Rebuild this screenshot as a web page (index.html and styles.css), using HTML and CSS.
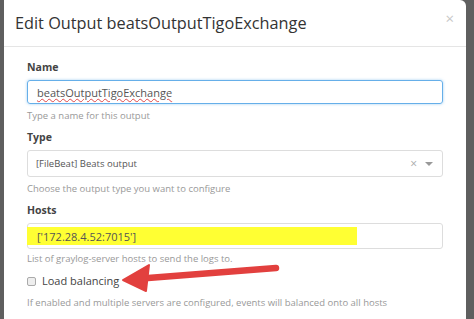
FILE: index.html
```html
<!DOCTYPE html>
<html>
<head>
  <title>Edit Output</title>
  <link rel="stylesheet" href="styles.css">
</head>
<body>
  <!-- Edit output modal -->
  <div class="modal">
    <div class="modal-header">
      <h3>Edit Output beatsOutputTigoExchange</h3>
      <span class="close-button">&times;</span>
    </div>
    <div class="modal-body">
      <div class="form-group">
        <label>Name</label>
        <div class="field focused"><span class="spell">beatsOutputTigoExchange</span></div>
        <p class="help">Type a name for this output</p>
      </div>
      <div class="form-group">
        <label>Type</label>
        <div class="field select">
          <span>[FileBeat] Beats output</span>
          <span class="select-icons">
            <span class="clear">&times;</span>
            <span class="caret"></span>
          </span>
        </div>
        <p class="help">Choose the output type you want to configure</p>
      </div>
      <div class="form-group">
        <label>Hosts</label>
        <div class="field hosts"><span class="mark">['172.28.4.52:7015']</span></div>
        <p class="help hosts-help">List of graylog-server hosts to send the logs to.</p>
      </div>
      <div class="checkbox">
        <span class="box"></span>
        <span>Load balancing</span>
      </div>
      <p class="help last-help">If enabled and multiple servers are configured, events will balanced onto all hosts</p>
    </div>

    <!-- annotation arrow -->
    <svg class="arrow" width="170" height="40" viewBox="0 0 170 40">
      <path d="M158 8 L30 18" stroke="#e2403e" stroke-width="6.5" stroke-linecap="round" fill="none"/>
      <path d="M5 20 L31 5 L28 31 Z" fill="#e2403e" stroke="#e2403e" stroke-width="2" stroke-linejoin="round"/>
    </svg>
  </div>
</body>
</html>
```

FILE: styles.css
```css
/* Modal over a dimmed page */
body {
  margin: 0;
  height: 319px;
  overflow: hidden;
  background-color: #5f5f5f;
  font-family: 'Open Sans', sans-serif;
  color: #333;
  padding: 0 8px 0 4px;
}

.modal {
  position: relative;
  background-color: #fff;
  border-radius: 0 6px 0 0;
  height: 330px;
}

.modal-header {
  display: flex;
  justify-content: space-between;
  align-items: center;
  height: 46px;
  padding: 0 12px 0 11px;
  border-bottom: 1px solid #e5e5e5;
}

.modal-header h3 {
  margin: 0;
  font-size: 16.3px;
  font-weight: normal;
  color: #333;
}

.close-button {
  font-size: 15px;
  color: #c8c8c8;
  position: relative;
  top: -5px;
}

.modal-body {
  padding: 13px 23px 0 23px;
}

.form-group {
  margin-bottom: 7px;
}

label {
  display: block;
  font-size: 10.5px;
  line-height: 14px;
  font-weight: bold;
  color: #444;
  margin-bottom: 6px;
}

.field {
  box-sizing: border-box;
  height: 24px;
  border: 1px solid #ddd;
  border-radius: 3px;
  display: flex;
  align-items: center;
  padding: 0 9px;
  font-size: 11px;
  color: #555;
}

.field.focused {
  border-color: #66afe9;
  box-shadow: 0 0 3px rgba(102, 175, 233, 0.6);
}

.spell {
  text-decoration: underline wavy #e04848;
  text-decoration-thickness: 1px;
  text-underline-offset: 1px;
}

.field.select {
  justify-content: space-between;
  height: 27px;
  padding: 0 9px 0 8px;
  font-size: 9.5px;
}

.select-icons {
  display: flex;
  align-items: center;
  gap: 8px;
  color: #aaa;
}

.clear {
  font-size: 12px;
}

.caret {
  width: 0;
  height: 0;
  border-left: 4px solid transparent;
  border-right: 4px solid transparent;
  border-top: 4px solid #999;
}

.field.hosts {
  padding: 0;
  height: 26px;
}

.mark {
  background-color: #ffff33;
  width: 330px;
  height: 18px;
  margin-left: -1px;
  display: flex;
  align-items: center;
  padding-left: 10px;
  box-sizing: border-box;
  color: #555;
}

.help {
  margin: 5px 0 0 0;
  font-size: 9.5px;
  line-height: 14px;
  color: #999;
}

.hosts-help {
  margin-top: 3px;
}

.checkbox {
  display: flex;
  align-items: center;
  gap: 6px;
  font-size: 11px;
  line-height: 16px;
  color: #444;
  margin-top: 6px;
}

.box {
  box-sizing: border-box;
  width: 9px;
  height: 9px;
  border: 1px solid #aaa;
  border-radius: 2px;
  background-color: #eee;
}

.last-help {
  margin-top: 7px;
}

.arrow {
  position: absolute;
  left: 114px;
  top: 260px;
}
```
